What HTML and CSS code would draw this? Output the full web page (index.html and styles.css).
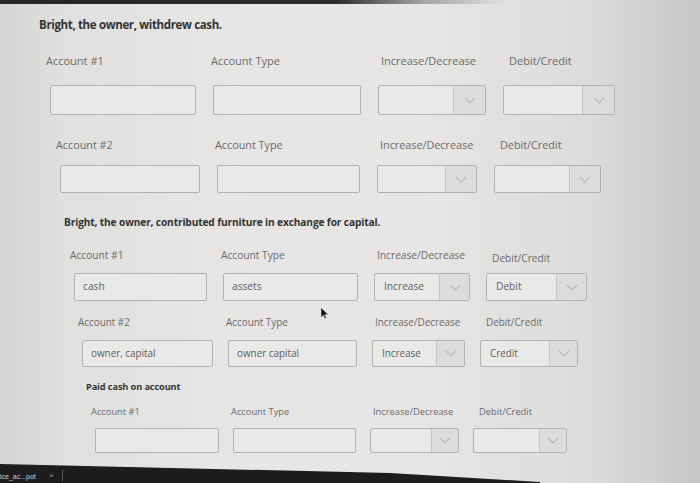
FILE: index.html
```html
<!DOCTYPE html>
<html lang="en">
<head>
<meta charset="utf-8">
<title>Journal entries</title>
<link rel="stylesheet" href="styles.css">
</head>
<body>
<div class="screen">
  <div class="bezel-top"></div>

  <h2 class="q-title t1">Bright, the owner, withdrew cash.</h2>
  <div class="entry ea">
    <span class="lbl c1">Account #1</span>
    <span class="lbl c2">Account Type</span>
    <span class="lbl c3">Increase/Decrease</span>
    <span class="lbl c4">Debit/Credit</span>
    <div class="field"></div>
    <div class="field"></div>
    <div class="field select"><span class="val"></span><span class="arrow"><svg viewBox="0 0 12 7"><path d="M1 1l5 5 5-5"/></svg></span></div>
    <div class="field select"><span class="val"></span><span class="arrow"><svg viewBox="0 0 12 7"><path d="M1 1l5 5 5-5"/></svg></span></div>
  </div>

  <div class="entry eb">
    <span class="lbl c1">Account #2</span>
    <span class="lbl c2">Account Type</span>
    <span class="lbl c3">Increase/Decrease</span>
    <span class="lbl c4">Debit/Credit</span>
    <div class="field"></div>
    <div class="field"></div>
    <div class="field select"><span class="val"></span><span class="arrow"><svg viewBox="0 0 12 7"><path d="M1 1l5 5 5-5"/></svg></span></div>
    <div class="field select"><span class="val"></span><span class="arrow"><svg viewBox="0 0 12 7"><path d="M1 1l5 5 5-5"/></svg></span></div>
  </div>

  <h2 class="q-title t3">Bright, the owner, contributed furniture in exchange for capital.</h2>
  <div class="entry ec">
    <span class="lbl c1">Account #1</span>
    <span class="lbl c2">Account Type</span>
    <span class="lbl c3">Increase/Decrease</span>
    <span class="lbl c4 low">Debit/Credit</span>
    <div class="field"><span class="val">cash</span></div>
    <div class="field"><span class="val">assets</span></div>
    <div class="field select"><span class="val">Increase</span><span class="arrow"><svg viewBox="0 0 12 7"><path d="M1 1l5 5 5-5"/></svg></span></div>
    <div class="field select"><span class="val">Debit</span><span class="arrow"><svg viewBox="0 0 12 7"><path d="M1 1l5 5 5-5"/></svg></span></div>
  </div>

  <div class="entry ed">
    <span class="lbl c1">Account #2</span>
    <span class="lbl c2">Account Type</span>
    <span class="lbl c3">Increase/Decrease</span>
    <span class="lbl c4">Debit/Credit</span>
    <div class="field"><span class="val">owner, capital</span></div>
    <div class="field"><span class="val">owner capital</span></div>
    <div class="field select"><span class="val">Increase</span><span class="arrow"><svg viewBox="0 0 12 7"><path d="M1 1l5 5 5-5"/></svg></span></div>
    <div class="field select"><span class="val">Credit</span><span class="arrow"><svg viewBox="0 0 12 7"><path d="M1 1l5 5 5-5"/></svg></span></div>
  </div>

  <h2 class="q-title t4">Paid cash on account</h2>
  <div class="entry ee">
    <span class="lbl c1">Account #1</span>
    <span class="lbl c2">Account Type</span>
    <span class="lbl c3">Increase/Decrease</span>
    <span class="lbl c4">Debit/Credit</span>
    <div class="field"></div>
    <div class="field"></div>
    <div class="field select"><span class="val"></span><span class="arrow"><svg viewBox="0 0 12 7"><path d="M1 1l5 5 5-5"/></svg></span></div>
    <div class="field select"><span class="val"></span><span class="arrow"><svg viewBox="0 0 12 7"><path d="M1 1l5 5 5-5"/></svg></span></div>
  </div>

  <svg class="cursor" viewBox="0 0 8 12"><path d="M1 0.5v10l2.4-2.3 1.6 3.5 1.4-0.6-1.6-3.4h3.3z"/></svg>

  <div class="taskbar">
    <span class="task-name">ice_ac...pot</span>
    <span class="task-caret">^</span>
    <span class="task-sep"></span>
  </div>
</div>
</body>
</html>
```

FILE: styles.css
```css
* {
  box-sizing: border-box;
  margin: 0;
  padding: 0;
}

html,
body {
  width: 700px;
  height: 483px;
  overflow: hidden;
}

body {
  font-family: "Open Sans", "Liberation Sans", sans-serif;
  background: #e2e2e0;
}

.screen {
  position: relative;
  width: 700px;
  height: 483px;
  overflow: hidden;
  display: flex;
  flex-direction: column;
  align-items: flex-start;
  background: linear-gradient(90deg, #d4d4d2 0%, #e0e0de 9%, #e7e6e4 35%, #e7e6e4 60%, #dcdcda 84%, #c6c6c6 100%);
}

.bezel-top {
  width: 100%;
  height: 4px;
  background: linear-gradient(90deg, #262628 0%, #2d2d30 48%, rgba(90, 90, 90, 0.5) 60%, rgba(200, 200, 200, 0) 72%);
}

.q-title {
  font-weight: 700;
  color: #333;
  white-space: nowrap;
}

.t1 {
  font-size: 11.5px;
  letter-spacing: -0.35px;
  line-height: 16px;
  margin: 13px 0 0 39px;
}

.t3 {
  font-size: 10.2px;
  letter-spacing: -0.15px;
  line-height: 14px;
  margin: 22px 0 0 64px;
}

.t4 {
  font-size: 9.2px;
  letter-spacing: -0.1px;
  line-height: 13px;
  margin: 13px 0 0 86px;
}

/* entry grids */
.entry {
  display: grid;
  align-items: start;
}

.ea {
  margin: 21px 0 0 50px;
  grid-template-columns: 146px 148px 108px 112px;
  column-gap: 17px;
  row-gap: 17px;
  font-size: 11px;
  --lh: 14px;
  --h: 30px;
  --aw: 32px;
}

.eb {
  margin: 23px 0 0 60px;
  grid-template-columns: 140px 143px 100px 107px;
  column-gap: 17px;
  row-gap: 13px;
  font-size: 10.8px;
  --lh: 14px;
  --h: 28px;
  --aw: 31px;
}

.ec {
  margin: 19px 0 0 74px;
  grid-template-columns: 133px 135px 96px 101px;
  column-gap: 16px;
  row-gap: 8px;
  font-size: 10.2px;
  --lh: 14px;
  --h: 28px;
  --aw: 30px;
}

.ed {
  margin: 14px 0 0 82px;
  grid-template-columns: 131px 129px 93px 98px;
  column-gap: 15px;
  row-gap: 11px;
  font-size: 9.9px;
  --lh: 14px;
  --h: 27px;
  --aw: 28px;
}

.ee {
  margin: 12px 0 0 95px;
  grid-template-columns: 124px 123px 89px 94px;
  column-gap: 14px;
  row-gap: 9px;
  font-size: 9.3px;
  --lh: 14px;
  --h: 25px;
  --aw: 27px;
}

.lbl {
  color: #6a6a6a;
  line-height: var(--lh);
  white-space: nowrap;
}

.c1 { margin-left: -4px; }
.c2 { margin-left: -2px; }
.c3 { margin-left: 3px; }
.c4 { margin-left: 6px; }
.low { margin-top: 3px; }

.field {
  height: var(--h);
  border: 1px solid #b2b2b0;
  border-radius: 2px;
  background: #e9e9e7;
  display: flex;
  align-items: center;
  color: #5e5e5e;
}

.field .val {
  flex: 1;
  padding-left: 8px;
  white-space: nowrap;
  margin-top: -2px;
}

.select .val {
  padding-left: 9px;
}

.arrow {
  width: var(--aw);
  align-self: stretch;
  border-left: 1px solid #c6c6c4;
  background: #dcdcda;
  display: flex;
  align-items: center;
  justify-content: center;
}

.arrow svg {
  width: 12px;
  height: 7px;
}

.arrow path {
  fill: none;
  stroke: #b9b9b7;
  stroke-width: 1.2;
}

/* overlays */
.cursor {
  position: absolute;
  left: 320px;
  top: 307px;
  width: 8px;
  height: 12px;
}

.cursor path {
  fill: #111;
  stroke: #e8e8e8;
  stroke-width: 0.5;
}

.taskbar {
  position: absolute;
  left: 0;
  bottom: 0;
  width: 540px;
  height: 19px;
  background: #1d1d20;
  clip-path: polygon(0 0, 390px 9px, 540px 18px, 540px 19px, 0 19px);
  display: flex;
  align-items: flex-end;
  padding-bottom: 2px;
  font-family: "Liberation Sans", sans-serif;
  font-size: 7px;
  color: #cfcfcf;
}

.task-name {
  line-height: 9px;
}

.task-caret {
  margin-left: 14px;
  line-height: 9px;
}

.task-sep {
  width: 1px;
  height: 11px;
  margin-left: 9px;
  background: #555;
}
```
